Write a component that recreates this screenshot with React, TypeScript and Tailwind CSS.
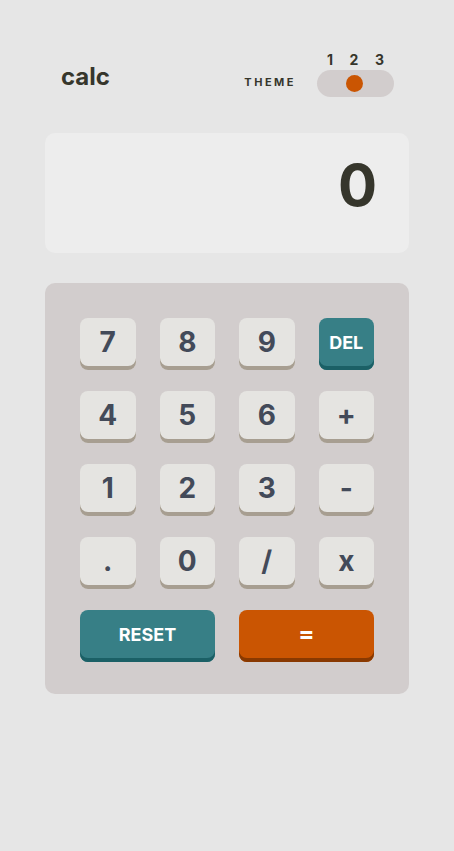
import React from 'react'

const font = { fontFamily: 'Inter, "Noto Sans", sans-serif' }

type KeyKind = 'num' | 'del' | 'reset' | 'equal'

interface KeyDef {
  label: string
  kind: KeyKind
}

const keys: KeyDef[] = [
  { label: '7', kind: 'num' },
  { label: '8', kind: 'num' },
  { label: '9', kind: 'num' },
  { label: 'DEL', kind: 'del' },
  { label: '4', kind: 'num' },
  { label: '5', kind: 'num' },
  { label: '6', kind: 'num' },
  { label: '+', kind: 'num' },
  { label: '1', kind: 'num' },
  { label: '2', kind: 'num' },
  { label: '3', kind: 'num' },
  { label: '-', kind: 'num' },
  { label: '.', kind: 'num' },
  { label: '0', kind: 'num' },
  { label: '/', kind: 'num' },
  { label: 'x', kind: 'num' },
  { label: 'RESET', kind: 'reset' },
  { label: '=', kind: 'equal' },
]

function Key({ label, kind }: KeyDef) {
  const base = 'h-[52px] rounded-lg pb-1 flex items-center justify-center font-bold'
  if (kind === 'num')
    return (
      <button className={`${base} bg-[#e5e4e1] shadow-[inset_0_-4px_0_#a79e91] text-[#434a59] text-[28px]`}>
        {label}
      </button>
    )
  if (kind === 'del')
    return (
      <button className={`${base} bg-[#377f86] shadow-[inset_0_-4px_0_#1b6066] text-white text-[18px]`}>
        {label}
      </button>
    )
  if (kind === 'reset')
    return (
      <button className={`${base} col-span-2 bg-[#377f86] shadow-[inset_0_-4px_0_#1b6066] text-white text-[18px]`}>
        {label}
      </button>
    )
  return (
    <button className={`${base} col-span-2 bg-[#ca5502] shadow-[inset_0_-4px_0_#893901] text-white text-[24px]`}>
      {label}
    </button>
  )
}

export default function App() {
  return (
    <div className="min-h-[851px] bg-[#e6e6e6]" style={font}>
      <div className="w-[364px] mx-auto pt-[53px]">
        <div className="flex items-center justify-between pl-4 pr-[15px]">
          <h1 className="text-[24px] font-bold text-[#36362c] leading-none mt-[4px]">calc</h1>
          <div className="flex items-end gap-[21px]">
            <span className="text-[11px] font-bold tracking-[2.5px] text-[#36362c] mb-[7px]">THEME</span>
            <div className="flex flex-col gap-[3px]">
              <div className="flex justify-between px-[10px] text-[14px] font-bold text-[#36362c] leading-none h-[14px]">
                <span>1</span>
                <span>2</span>
                <span>3</span>
              </div>
              <div className="w-[77px] h-[27px] rounded-full bg-[#d2cdcd] flex items-center justify-center">
                <div className="w-[17px] h-[17px] rounded-full bg-[#ca5502] -ml-[3px]" />
              </div>
            </div>
          </div>
        </div>

        <div className="mt-[36px] h-[120px] rounded-[10px] bg-[#ededed] flex items-center justify-end pr-8 pb-4">
          <span className="text-[58px] font-bold text-[#36362c] leading-none">0</span>
        </div>

        <div className="mt-[30px] rounded-[10px] bg-[#d2cdcd] pt-[35px] pb-[32px] px-[35px] grid grid-cols-4 gap-x-6 gap-y-[21px]">
          {keys.map(k => (
            <Key key={k.label} {...k} />
          ))}
        </div>
      </div>
    </div>
  )
}
